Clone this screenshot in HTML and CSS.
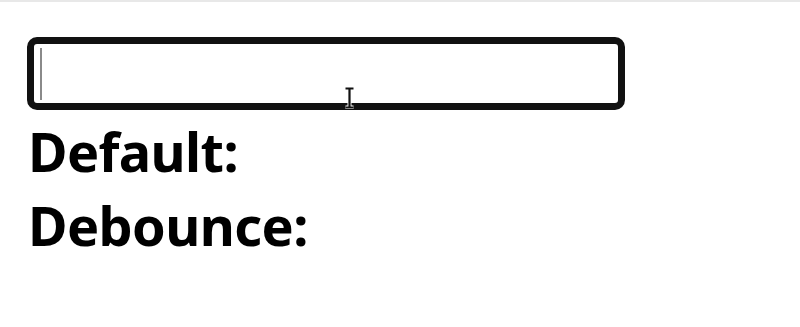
FILE: index.html
```html
<!DOCTYPE html>
<html lang="en">
<head>
  <meta charset="UTF-8" />
  <meta name="viewport" content="width=device-width, initial-scale=1.0" />
  <title>Debounce</title>
  <link rel="stylesheet" href="styles.css">
</head>
<body>
  <div class="app">
    <div class="field">
      <input type="text" class="search" aria-label="search">
      <span class="caret"></span>
      <svg class="ibeam" width="11" height="22" viewBox="0 0 11 22">
        <path d="M1.5 1.5h8M5.5 1.5v19M1.5 20.5h8" stroke="#fff" stroke-width="4" fill="none"/>
        <path d="M1.5 1.5h8M5.5 1.5v19M1.5 20.5h8" stroke="#111" stroke-width="2.2" fill="none"/>
      </svg>
    </div>
    <div class="results">
      <div class="line">Default:</div>
      <div class="line">Debounce:</div>
    </div>
  </div>
</body>
</html>
```

FILE: styles.css
```css
body {
  margin: 0;
  background: #fff;
  font-family: "Noto Sans", "Open Sans", sans-serif;
  border-top: 2px solid #e8e8e8;
}
.app {
  padding: 35px 0 0 27px;
}
.field {
  position: relative;
  width: 598px;
  height: 73px;
}
.search {
  box-sizing: border-box;
  width: 100%;
  height: 100%;
  border: 7px solid #111;
  border-radius: 10px;
  outline: none;
  background: #fff;
  font-size: 40px;
  padding: 0 10px;
}
.caret {
  position: absolute;
  left: 13px;
  top: 11px;
  width: 2px;
  height: 52px;
  background: #8a8a8a;
}
.ibeam {
  position: absolute;
  left: 317px;
  top: 50px;
}
.results {
  margin-top: 4px;
}
.line {
  font-weight: bold;
  font-size: 54px;
  letter-spacing: -0.6px;
  line-height: 74px;
  color: #000;
  margin-left: 1px;
}
```
